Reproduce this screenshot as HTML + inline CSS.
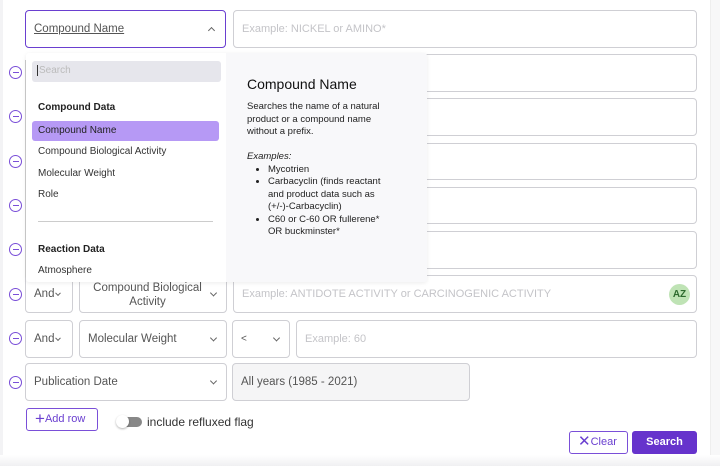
<!DOCTYPE html>
<html><head><style>
*{box-sizing:border-box;margin:0;padding:0}
body{width:720px;height:466px;background:#fff;font-family:"Liberation Sans",sans-serif;position:relative;overflow:hidden;color:#444}
.a{position:absolute}
.box{position:absolute;border:1px solid #cfcfd4;border-radius:4px;background:#fff}
.ph{color:#c4c4c8;font-size:11px;position:absolute;left:8px;top:50%;transform:translateY(-50%);white-space:nowrap}
.lbl{font-size:11.5px;color:#555;position:absolute;left:8px;top:50%;transform:translateY(-50%);white-space:nowrap}
.chev{position:absolute;right:10px;top:50%;width:5px;height:5px;border-right:1.3px solid #666;border-bottom:1.3px solid #666;transform:translateY(-70%) rotate(45deg)}
.minus{position:absolute;left:9px;width:13px;height:13px;border:1.4px solid #7a4fd8;border-radius:50%}
.minus:after{content:"";position:absolute;left:2.5px;right:2.5px;top:4.5px;height:1.4px;background:#7a4fd8}
</style></head><body>
<div class="a" style="left:0;top:0;width:3px;height:466px;background:#f3f3f5"></div>
<div class="a" style="left:710px;top:0;width:10px;height:466px;background:#f7f7f8;border-left:1px solid #eee"></div>
<div class="a" style="left:0;top:455px;width:720px;height:11px;background:linear-gradient(#fff,#f0f0f2)"></div>

<div class="box" style="left:25px;top:10px;width:201px;height:38px;border:1.5px solid #6a3fd0"><span class="lbl" style="text-decoration:underline;color:#555">Compound Name</span><div class="a" style="right:11px;top:17px;width:5px;height:5px;border-left:1.3px solid #666;border-top:1.3px solid #666;transform:rotate(45deg)"></div></div>
<div class="box" style="left:233px;top:10px;width:464px;height:38px"><span class="ph">Example: NICKEL or AMINO*</span></div>

<div class="box" style="left:233px;top:54px;width:464px;height:38px"></div>
<div class="box" style="left:233px;top:98px;width:464px;height:38px"></div>
<div class="box" style="left:233px;top:143px;width:464px;height:37px"></div>
<div class="box" style="left:233px;top:187px;width:464px;height:37px"></div>
<div class="box" style="left:233px;top:231px;width:464px;height:38px"></div>
<div class="minus" style="top:66px"></div>
<div class="minus" style="top:110px"></div>
<div class="minus" style="top:155px"></div>
<div class="minus" style="top:199px"></div>
<div class="minus" style="top:243px"></div>
<div class="a" style="left:25px;top:60px;width:1px;height:220px;background:#ccc"></div>

<div class="minus" style="top:288px"></div>
<div class="box" style="left:25px;top:275px;width:48px;height:38px"><span class="lbl">And</span><div class="chev" style="right:12px;width:4px;height:4px"></div></div>
<div class="box" style="left:79px;top:275px;width:148px;height:38px"><span class="a" style="left:10px;top:5px;width:115px;text-align:center;font-size:11.5px;color:#555;line-height:14px">Compound Biological Activity</span><div class="chev"></div></div>
<div class="box" style="left:233px;top:275px;width:464px;height:38px"><span class="ph">Example: ANTIDOTE ACTIVITY or CARCINOGENIC ACTIVITY</span><div class="a" style="right:6px;top:8px;width:21px;height:21px;border-radius:50%;background:#bfe3b5;color:#2d6a2d;font-size:10px;font-weight:bold;text-align:center;line-height:21px">AZ</div></div>

<div class="minus" style="top:332px"></div>
<div class="box" style="left:25px;top:320px;width:48px;height:38px"><span class="lbl">And</span><div class="chev" style="right:12px;width:4px;height:4px"></div></div>
<div class="box" style="left:79px;top:320px;width:148px;height:38px"><span class="lbl">Molecular Weight</span><div class="chev"></div></div>
<div class="box" style="left:232px;top:320px;width:58px;height:38px"><span class="lbl" style="font-size:10px">&lt;</span><div class="chev"></div></div>
<div class="box" style="left:296px;top:320px;width:401px;height:38px"><span class="ph">Example: 60</span></div>

<div class="minus" style="top:376px"></div>
<div class="box" style="left:25px;top:363px;width:202px;height:38px"><span class="lbl">Publication Date</span><div class="chev"></div></div>
<div class="box" style="left:232px;top:363px;width:238px;height:38px;background:#f5f5f6"><span class="lbl">All years (1985 - 2021)</span></div>

<div class="a" style="left:26px;top:408px;width:72px;height:23px;border:1.3px solid #7a4fd8;border-radius:3px;color:#6a3fd0;font-size:11px;line-height:20px;padding-left:8px"><span style="font-size:17px;vertical-align:-2px">+</span>Add row</div>
<div class="a" style="left:117px;top:417px;width:25px;height:10px;border-radius:5px;background:#888"></div>
<div class="a" style="left:116px;top:415px;width:13px;height:13px;border-radius:50%;background:#fff;box-shadow:0 1px 2px rgba(0,0,0,.3)"></div>
<div class="a" style="left:147px;top:415px;font-size:12px;color:#333">include refluxed flag</div>

<div class="a" style="left:569px;top:431px;width:59px;height:23px;border:1.3px solid #7a4fd8;border-radius:3px;color:#6a3fd0;font-size:11px;line-height:20px;padding-left:8px"><span style="font-size:15px;vertical-align:-1px">✕</span>Clear</div>
<div class="a" style="left:632px;top:431px;width:65px;height:23px;background:#6633cc;border-radius:3px;color:#fff;font-size:11px;line-height:23px;text-align:center;font-weight:bold">Search</div>

<div class="a" style="left:26px;top:53px;width:401px;height:229px;background:#fff;box-shadow:0 1px 4px rgba(0,0,0,.08);border-radius:3px"></div>
<div class="a" style="left:226px;top:53px;width:201px;height:229px;background:#f8f8fa;border-radius:0 3px 3px 0"></div>
<div class="a" style="left:32px;top:61px;width:189px;height:21px;background:#e6e6ec;border-radius:3px"><span class="a" style="left:5px;top:4px;font-size:10px;color:#bbb;border-left:1px solid #333;padding-left:1px">Search</span></div>
<div class="a" style="left:38px;top:102px;font-size:10px;font-weight:bold;color:#222">Compound Data</div>
<div class="a" style="left:32px;top:121px;width:187px;height:20px;background:#b699f5;border-radius:3px"><span class="a" style="left:6px;top:4px;font-size:10px;color:#222">Compound Name</span></div>
<div class="a" style="left:38px;top:146px;font-size:10px;color:#333">Compound Biological Activity</div>
<div class="a" style="left:38px;top:168px;font-size:10px;color:#333">Molecular Weight</div>
<div class="a" style="left:38px;top:189px;font-size:10px;color:#333">Role</div>
<div class="a" style="left:38px;top:221px;width:175px;height:1px;background:#ccc"></div>
<div class="a" style="left:38px;top:244px;font-size:10px;font-weight:bold;color:#222">Reaction Data</div>
<div class="a" style="left:38px;top:265px;font-size:10px;color:#333">Atmosphere</div>

<div class="a" style="left:247px;top:76px;font-size:14px;color:#111">Compound Name</div>
<div class="a" style="left:247px;top:101px;width:148px;font-size:9.5px;line-height:12.5px;color:#222">Searches the name of a natural product or a compound name without a prefix.<br><br><i>Examples:</i>
<ul style="padding-left:21px;margin:0">
<li>Mycotrien</li>
<li>Carbacyclin (finds reactant and product data such as (+/-)-Carbacyclin)</li>
<li>C60 or C-60 OR fullerene* OR buckminster*</li>
</ul></div>
</body></html>
